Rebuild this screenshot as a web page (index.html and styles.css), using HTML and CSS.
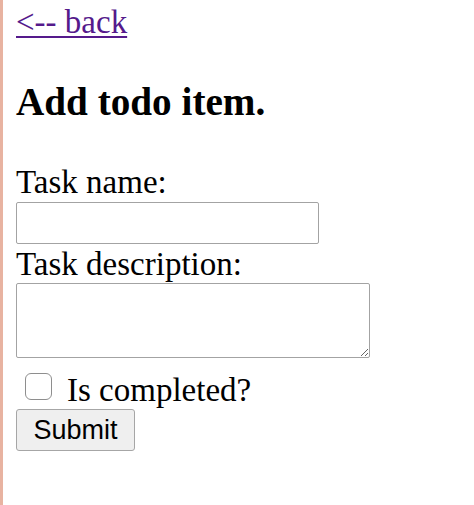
FILE: index.html
```html
<!DOCTYPE html>
<html lang="en">
<head>
<meta charset="utf-8">
<title>Add todo item</title>
<link rel="stylesheet" href="styles.css">
</head>
<body>
<div class="page">
  <a class="back" href="#">&lt;-- back</a>
  <h3 class="title">Add todo item.</h3>
  <form class="form">
    <label class="label" for="name">Task name:</label>
    <input class="field" id="name" type="text">
    <label class="label" for="desc">Task description:</label>
    <textarea class="area" id="desc"></textarea>
    <div class="check-row">
      <input class="check" id="done" type="checkbox">
      <label class="check-label" for="done">Is completed?</label>
    </div>
    <button class="submit" type="button">Submit</button>
  </form>
</div>
</body>
</html>
```

FILE: styles.css
```css
html, body {
  margin: 0;
  padding: 0;
  background: #ffffff;
}
.page {
  min-height: 505px;
  box-sizing: border-box;
  border-left: 3px solid #e8b3a1;
  padding: 4px 0 0 13px;
  font-family: "Liberation Serif", "Times New Roman", serif;
  font-size: 33px;
  line-height: 36px;
  color: #000;
  display: flex;
  flex-direction: column;
  align-items: flex-start;
}
.back {
  color: #551a8b;
  text-decoration: underline;
  text-underline-offset: 3px;
  text-decoration-thickness: 2px;
}
.title {
  margin: 41px 0 0 0;
  font-size: 39.2px;
  line-height: 42px;
  font-weight: bold;
}
.form {
  margin-top: 41px;
  display: flex;
  flex-direction: column;
  align-items: flex-start;
}
.label {
  display: block;
}
.field {
  margin: 2px 0 2px 0;
  width: 303px;
  height: 42px;
  box-sizing: border-box;
  border: 1px solid #a3a3a3;
  border-radius: 2px;
  padding: 2px 4px;
  font-size: 26px;
  font-family: "Liberation Sans", Arial, sans-serif;
  background: #fff;
}
.area {
  margin: 1px 0 0 0;
  width: 354px;
  height: 75px;
  box-sizing: border-box;
  border: 1px solid #a3a3a3;
  border-radius: 2px;
  padding: 2px;
  font-family: "Liberation Mono", monospace;
  font-size: 26px;
  resize: both;
  background: #fff;
}
.check-row {
  margin-top: 14px;
  display: flex;
  align-items: flex-start;
}
.check {
  appearance: none;
  -webkit-appearance: none;
  margin: 1px 15px 0 9px;
  width: 27px;
  height: 27px;
  box-sizing: border-box;
  border: 1px solid #8e8e8e;
  border-radius: 6px;
  background: #fff;
}
.check-label {
  display: block;
}
.submit {
  margin-top: 1px;
  width: 119px;
  height: 42px;
  box-sizing: border-box;
  border: 1px solid #a6a6a6;
  border-radius: 3px;
  background: #efefef;
  font-family: "Liberation Sans", Arial, sans-serif;
  font-size: 27px;
  color: #000;
  padding: 0;
}
```
